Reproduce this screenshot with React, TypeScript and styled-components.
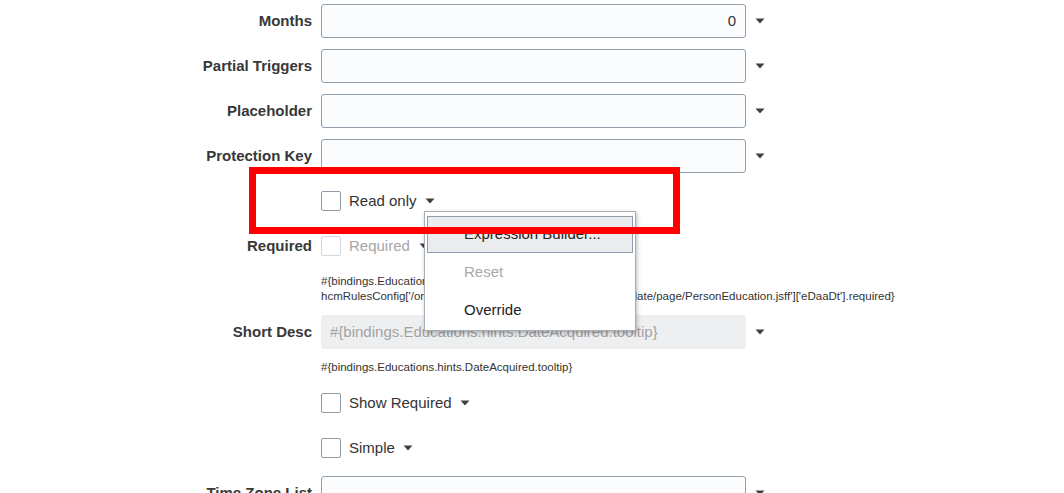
import React from "react";
import styled, { createGlobalStyle, css } from "styled-components";

const GlobalStyle = createGlobalStyle`
  html, body { margin: 0; padding: 0; background: #ffffff; }
  body { font-family: "Liberation Sans", Arial, sans-serif; color: #333333; }
  * { box-sizing: border-box; }
`;

const Page = styled.div`
  position: relative;
  width: 1064px;
  height: 493px;
  overflow: hidden;
  padding-top: 4px;
  display: flex;
  flex-direction: column;
  gap: 11px;
`;

const Row = styled.div<{ $auto?: boolean }>`
  display: grid;
  grid-template-columns: 312px 425px 10px;
  column-gap: 9px;
  align-items: center;
  flex: none;
  height: ${(p) => (p.$auto ? "auto" : "34px")};
`;

const Label = styled.div`
  text-align: right;
  font-size: 15px;
  font-weight: bold;
  color: #383838;
  white-space: nowrap;
  padding-bottom: 2px;
`;

const TextBox = styled.div<{ $disabled?: boolean; $align?: "left" | "right" }>`
  height: 34px;
  border-radius: 3px;
  padding: 0 9px 2px 8px;
  display: flex;
  align-items: center;
  justify-content: ${(p) => (p.$align === "right" ? "flex-end" : "flex-start")};
  font-size: 15px;
  white-space: nowrap;
  overflow: hidden;
  ${(p) =>
    p.$disabled
      ? css`
          background: #eeeff1;
          border: 1px solid #eeeff1;
          color: #a3a3a3;
        `
      : css`
          background: #fbfcfd;
          border: 1px solid #939fab;
          color: #333333;
        `}
`;

const ArrowSvg = styled.svg<{ $gap?: number }>`
  display: block;
  width: 10px;
  height: 6px;
  margin-left: ${(p) => p.$gap ?? 0}px;
  flex: none;
`;

const Arrow = ({ gap, color = "#404040" }: { gap?: number; color?: string }) => (
  <ArrowSvg $gap={gap} viewBox="0 0 10 6">
    <path d="M0.5 0.5 H9.5 L5 5.5 Z" fill={color} />
  </ArrowSvg>
);

const CheckField = styled.div`
  display: flex;
  align-items: center;
  white-space: nowrap;
`;

const Checkbox = styled.span<{ $disabled?: boolean }>`
  display: block;
  width: 20px;
  height: 20px;
  border-radius: 2px;
  background: #ffffff;
  border: 1px solid ${(p) => (p.$disabled ? "#d3d7db" : "#8f9ba6")};
  flex: none;
`;

const CheckText = styled.span<{ $disabled?: boolean }>`
  margin-left: 8px;
  font-size: 15px;
  padding-bottom: 2px;
  color: ${(p) => (p.$disabled ? "#a6a6a6" : "#333333")};
`;

const Help = styled.div<{ $lh?: number }>`
  grid-column: 2 / span 2;
  font-size: 11.5px;
  line-height: ${(p) => p.$lh ?? 15}px;
  color: #333333;
  white-space: nowrap;
`;

const Menu = styled.div`
  position: absolute;
  left: 424px;
  top: 211px;
  width: 212px;
  height: 120px;
  background: #ffffff;
  border: 1px solid #a6afb8;
  box-shadow: 1px 2px 4px rgba(0, 0, 0, 0.28);
  padding: 4px 2px 3px 2px;
  display: flex;
  flex-direction: column;
  z-index: 5;
`;

const MenuItem = styled.div<{ $active?: boolean; $disabled?: boolean }>`
  height: 37px;
  flex: none;
  display: flex;
  align-items: center;
  padding: 0 0 3px 36px;
  font-size: 15px;
  white-space: nowrap;
  color: ${(p) => (p.$disabled ? "#a8a8a8" : "#222222")};
  border: 1px solid ${(p) => (p.$active ? "#8f9dab" : "transparent")};
  background: ${(p) => (p.$active ? "#ebecee" : "transparent")};
  & + & {
    margin-top: 1px;
  }
`;

const Highlight = styled.div`
  position: absolute;
  left: 249px;
  top: 167px;
  width: 431px;
  height: 67px;
  border: 7px solid #ff0000;
  z-index: 10;
  pointer-events: none;
`;

const fields = [
  { label: "Months", value: "0", align: "right" as const },
  { label: "Partial Triggers", value: "" },
  { label: "Placeholder", value: "" },
  { label: "Protection Key", value: "" },
];

export default function App() {
  return (
    <>
      <GlobalStyle />
      <Page>
        {fields.map((f) => (
          <Row key={f.label}>
            <Label>{f.label}</Label>
            <TextBox $align={f.align}>{f.value}</TextBox>
            <Arrow />
          </Row>
        ))}

        <Row>
          <span />
          <CheckField>
            <Checkbox />
            <CheckText>Read only</CheckText>
            <Arrow gap={8} />
          </CheckField>
        </Row>

        <Row>
          <Label>Required</Label>
          <CheckField>
            <Checkbox $disabled />
            <CheckText $disabled>Required</CheckText>
            <Arrow gap={9} />
          </CheckField>
        </Row>

        <Row $auto>
          <Help>
            {"#{bindings.Educations.hints.DateAcquired.mandatory or"}
            <br />
            {"hcmRulesConfig['/oracle/apps/hcm/people/core/publicUi/template/page/PersonEducation.jsff']['eDaaDt'].required}"}
          </Help>
        </Row>

        <Row>
          <Label>Short Desc</Label>
          <TextBox $disabled>{"#{bindings.Educations.hints.DateAcquired.tooltip}"}</TextBox>
          <Arrow />
        </Row>

        <Row $auto>
          <Help>{"#{bindings.Educations.hints.DateAcquired.tooltip}"}</Help>
        </Row>

        <Row>
          <span />
          <CheckField>
            <Checkbox />
            <CheckText>Show Required</CheckText>
            <Arrow gap={8} />
          </CheckField>
        </Row>

        <Row>
          <span />
          <CheckField>
            <Checkbox />
            <CheckText>Simple</CheckText>
            <Arrow gap={8} />
          </CheckField>
        </Row>

        <Row>
          <Label>Time Zone List</Label>
          <TextBox />
          <Arrow />
        </Row>

        <Menu>
          <MenuItem $active>Expression Builder...</MenuItem>
          <MenuItem $disabled>Reset</MenuItem>
          <MenuItem>Override</MenuItem>
        </Menu>
        <Highlight />
      </Page>
    </>
  );
}
